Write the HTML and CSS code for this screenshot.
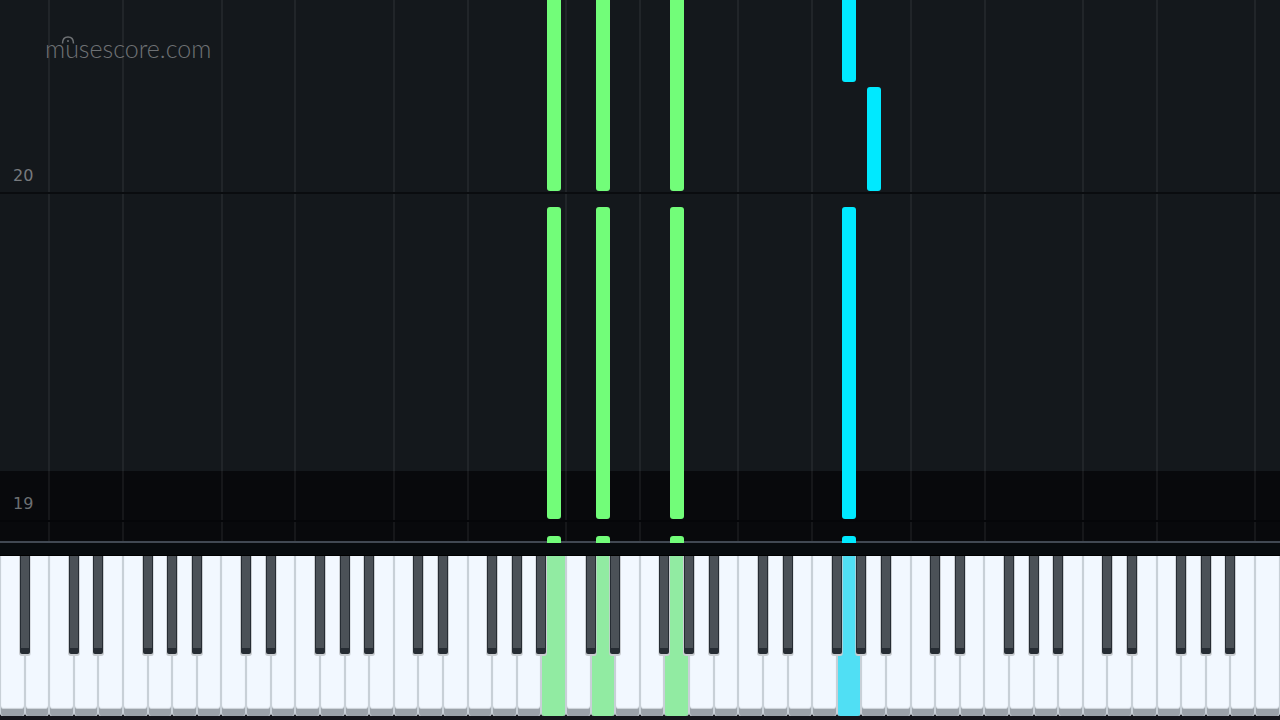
FILE: index.html
```html
<!DOCTYPE html>
<html lang="en">
<head>
<meta charset="utf-8">
<title>Piano roll</title>
<link rel="stylesheet" href="styles.css">
</head>
<body>
<main class="player">
  <section class="roll" id="roll" aria-label="Piano roll">
    <div class="shade"></div>
    <div class="brand">
      <span class="brand-name">musescore.com</span>
      <svg class="brand-mark" viewBox="0 0 14 8" aria-hidden="true">
        <path d="M1.5 7.500C1.500 3 4 1 7 1s5.500 2 5.500 6.500" fill="none" stroke="currentColor" stroke-width="1.500"/>
        <circle cx="7" cy="5" r="1" fill="currentColor"/>
      </svg>
    </div>
  </section>
  <div class="rail"></div>
  <section class="keyboard" id="keyboard" aria-label="Keyboard"></section>
</main>
<script src="script.js"></script>
</body>
</html>
```
FILE: styles.css
```css
* {
  box-sizing: border-box;
}

body {
  margin: 0;
  background: #101317;
  font-family: "DejaVu Sans", sans-serif;
}

.player {
  display: flex;
  flex-direction: column;
  height: 100vh;
  overflow: hidden;
}

.roll {
  position: relative;
  flex: 1;
  overflow: clip;
  overflow-clip-margin: border-box;
  background: #14181c;
  border-bottom: 2px solid #414852;
}

.shade {
  position: absolute;
  inset: auto 0 0;
  height: 70px;
  background: #08090c;
}

.octave-line {
  position: absolute;
  top: 0;
  bottom: 0;
  width: 2px;
  margin-left: -1px;
  background: rgba(255, 255, 255, 0.06);
}

.measure {
  position: absolute;
  left: 0;
  right: 0;
  height: 28px;
  padding-left: 13px;
  border-bottom: 2px solid #0a0c0f;
  color: #777a7e;
  font-size: 16px;
  line-height: 20px;
}

.measure.dim {
  border-color: #050609;
  color: #6c6f72;
}

.brand {
  position: absolute;
  top: 32px;
  left: 45px;
  color: #6e7174;
}

.brand-name {
  font-family: Lato, sans-serif;
  font-size: 25px;
  font-weight: 300;
  line-height: 32px;
}

.brand-mark {
  position: absolute;
  top: 4px;
  left: 16px;
  width: 14px;
  height: 8px;
}

.note {
  position: absolute;
  z-index: 1;
  width: 14px;
  margin-left: -7px;
  border-radius: 3px;
}

.note.left {
  background: #72fd79;
}

.note.right {
  background: #00e9ff;
}

.rail {
  height: 13px;
  background: #080b0e;
  border-bottom: 1px solid #000;
}

.keyboard {
  display: flex;
  height: 164px;
  padding-bottom: 4px;
  background: #14151b;
}

.slot {
  position: relative;
  flex: 1;
}

.white {
  display: block;
  width: 100%;
  height: 100%;
  padding: 0;
  background: #f2f8ff;
  border: solid #c8d0d7;
  border-width: 0 1px;
  border-radius: 0 0 3px 3px;
  box-shadow: inset 0 -7px #9ba2a9, inset 0 -8px 1px #cbd1d7;
}

.white.left {
  background: #91eba2;
  box-shadow: none;
}

.white.right {
  background: #50dff4;
  box-shadow: none;
}

.black {
  position: absolute;
  z-index: 1;
  top: 0;
  right: -5px;
  width: 10px;
  height: 98px;
  padding: 0;
  background: #4b5157;
  border: solid #262c33;
  border-width: 0 1px 6px;
  border-radius: 0 0 2px 2px;
  box-shadow: 0 1px 0 1px #c9cdd1;
  clip-path: inset(0 -1px -2px);
}
```
FILE: script.js
```js
const WHITE_KEYS = 52;
const HAS_SHARP = [true, false, true, true, false, true, true];
const ENDS_GROUP = [false, true, false, false, true, false, false];

// bottom and height are offsets from the playing edge of the roll
const notes = [
  ...[22, 24, 27].flatMap((key) => [
    { key, hand: "left", bottom: 350, height: 200 },
    { key, hand: "left", bottom: 22, height: 312 },
    { key, hand: "left", bottom: -7, height: 12 }
  ]),
  { key: 34, hand: "right", bottom: 459, height: 91 },
  { key: 35, hand: "right", bottom: 350, height: 104 },
  { key: 34, hand: "right", bottom: 22, height: 312 },
  { key: 34, hand: "right", bottom: -7, height: 12 }
];
const measures = [
  { number: 20, bottom: 347 },
  { number: 19, bottom: 19, dim: true }
];
const pressed = { 22: "left", 24: "left", 27: "left", 34: "right" };

const roll = document.getElementById("roll");
const keyboard = document.getElementById("keyboard");

function add(parent, tag, className) {
  const element = document.createElement(tag);
  element.className = className;
  parent.append(element);
  return element;
}

for (let key = 0; key < WHITE_KEYS; key++) {
  const slot = add(keyboard, "div", "slot");
  const white = add(slot, "button", "white " + (pressed[key] || ""));
  const name = "ABCDEFG"[key % 7];
  const octave = Math.floor((key + 5) / 7);
  white.setAttribute("aria-label", name + octave);
  if (key < WHITE_KEYS - 1 && HAS_SHARP[key % 7]) {
    const black = add(slot, "button", "black");
    black.setAttribute("aria-label", name + " sharp " + octave);
  }
  if (ENDS_GROUP[key % 7]) {
    const line = add(roll, "div", "octave-line");
    line.style.left = ((key + 1) / WHITE_KEYS) * 100 + "%";
  }
}

for (const item of measures) {
  const measure = add(roll, "div", "measure" + (item.dim ? " dim" : ""));
  measure.textContent = item.number;
  measure.style.bottom = item.bottom + "px";
}

for (const item of notes) {
  const note = add(roll, "div", "note " + item.hand);
  note.style.left = ((item.key + 0.5) / WHITE_KEYS) * 100 + "%";
  note.style.bottom = item.bottom + "px";
  note.style.height = item.height + "px";
}
```
